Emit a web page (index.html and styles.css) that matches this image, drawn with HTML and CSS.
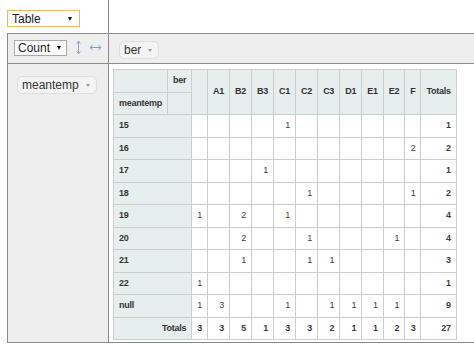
FILE: index.html
```html
<!DOCTYPE html>
<html>
<head>
<meta charset="utf-8">
<link rel="stylesheet" href="styles.css">
</head>
<body>
<div class="ui">
  <div class="cell renderers">
    <div class="select select-renderer"><span>Table</span><span class="caret"></span></div>
  </div>
  <div class="cell unused"></div>
  <div class="cell aggregator">
    <div class="select select-agg"><span>Count</span><span class="caret"></span></div>
    <svg class="order row-order" width="5" height="15" viewBox="0 0 5 15"><path d="M2.5 1.2V13.8M0.6 3.6L2.5 1.2L4.4 3.6M0.6 11.4L2.5 13.8L4.4 11.4" fill="none" stroke="#8aa6c6" stroke-width="1"/></svg>
    <svg class="order col-order" width="13" height="7" viewBox="0 0 13 7"><path d="M1 3.5H12M3.6 1.2L1 3.5L3.6 5.8M9.4 1.2L12 3.5L9.4 5.8" fill="none" stroke="#6f9fd6" stroke-width="1"/></svg>
  </div>
  <div class="cell cols">
    <span class="attr">ber<span class="tri"></span></span>
  </div>
  <div class="cell rows">
    <span class="attr">meantemp<span class="tri"></span></span>
  </div>
  <div class="cell output">
    <table class="pvtTable">
      <thead>
        <tr>
          <th></th>
          <th class="pvtAxisLabel">ber</th>
          <th class="pvtColLabel" rowspan="2"></th>
          <th class="pvtColLabel" rowspan="2">A1</th>
          <th class="pvtColLabel" rowspan="2">B2</th>
          <th class="pvtColLabel" rowspan="2">B3</th>
          <th class="pvtColLabel" rowspan="2">C1</th>
          <th class="pvtColLabel" rowspan="2">C2</th>
          <th class="pvtColLabel" rowspan="2">C3</th>
          <th class="pvtColLabel" rowspan="2">D1</th>
          <th class="pvtColLabel" rowspan="2">E1</th>
          <th class="pvtColLabel" rowspan="2">E2</th>
          <th class="pvtColLabel" rowspan="2">F</th>
          <th class="pvtTotalLabel" rowspan="2">Totals</th>
        </tr>
        <tr>
          <th class="pvtAxisLabel">meantemp</th>
          <th></th>
        </tr>
      </thead>
      <tbody>
        <tr><th class="pvtRowLabel" colspan="2">15</th><td></td><td></td><td></td><td></td><td>1</td><td></td><td></td><td></td><td></td><td></td><td></td><td class="pvtTotal">1</td></tr>
        <tr><th class="pvtRowLabel" colspan="2">16</th><td></td><td></td><td></td><td></td><td></td><td></td><td></td><td></td><td></td><td></td><td>2</td><td class="pvtTotal">2</td></tr>
        <tr><th class="pvtRowLabel" colspan="2">17</th><td></td><td></td><td></td><td>1</td><td></td><td></td><td></td><td></td><td></td><td></td><td></td><td class="pvtTotal">1</td></tr>
        <tr><th class="pvtRowLabel" colspan="2">18</th><td></td><td></td><td></td><td></td><td></td><td>1</td><td></td><td></td><td></td><td></td><td>1</td><td class="pvtTotal">2</td></tr>
        <tr><th class="pvtRowLabel" colspan="2">19</th><td>1</td><td></td><td>2</td><td></td><td>1</td><td></td><td></td><td></td><td></td><td></td><td></td><td class="pvtTotal">4</td></tr>
        <tr><th class="pvtRowLabel" colspan="2">20</th><td></td><td></td><td>2</td><td></td><td></td><td>1</td><td></td><td></td><td></td><td>1</td><td></td><td class="pvtTotal">4</td></tr>
        <tr><th class="pvtRowLabel" colspan="2">21</th><td></td><td></td><td>1</td><td></td><td></td><td>1</td><td>1</td><td></td><td></td><td></td><td></td><td class="pvtTotal">3</td></tr>
        <tr><th class="pvtRowLabel" colspan="2">22</th><td>1</td><td></td><td></td><td></td><td></td><td></td><td></td><td></td><td></td><td></td><td></td><td class="pvtTotal">1</td></tr>
        <tr><th class="pvtRowLabel" colspan="2">null</th><td>1</td><td>3</td><td></td><td></td><td>1</td><td></td><td>1</td><td>1</td><td>1</td><td>1</td><td></td><td class="pvtTotal">9</td></tr>
        <tr><th class="pvtTotalLabel" colspan="2">Totals</th><td class="pvtTotal">3</td><td class="pvtTotal">3</td><td class="pvtTotal">5</td><td class="pvtTotal">1</td><td class="pvtTotal">3</td><td class="pvtTotal">3</td><td class="pvtTotal">2</td><td class="pvtTotal">1</td><td class="pvtTotal">1</td><td class="pvtTotal">2</td><td class="pvtTotal">3</td><td class="pvtGrandTotal">27</td></tr>
      </tbody>
    </table>
  </div>
</div>
</body>
</html>
```

FILE: styles.css
```css
html, body {
  margin: 0;
  padding: 0;
}
body {
  font-family: "Liberation Sans", Arial, sans-serif;
  color: #333;
  background: #fff;
  overflow: hidden;
}
.ui {
  display: grid;
  grid-template-columns: 101px 1fr;
  margin-left: 7px;
}
.cell {
  box-sizing: border-box;
}
.renderers {
  height: 34px;
  padding-top: 10px;
  border-bottom: 1px solid #8c8c8c;
}
.unused {
  height: 34px;
  border-left: 1px solid #8c8c8c;
  border-bottom: 1px solid #8c8c8c;
}
.aggregator {
  height: 30px;
  display: flex;
  align-items: flex-start;
  padding: 6px 0 0 6px;
  background: #eeeeee;
  border-left: 1px solid #8c8c8c;
  border-bottom: 1px solid #8c8c8c;
}
.cols {
  height: 30px;
  padding: 6px 0 0 10px;
  background: #eeeeee;
  border-left: 1px solid #8c8c8c;
  border-bottom: 1px solid #8c8c8c;
}
.rows {
  padding: 11px 0 0 9px;
  background: #eeeeee;
  border-left: 1px solid #8c8c8c;
  border-bottom: 1px solid #8c8c8c;
}
.output {
  padding: 5px 0 2px 4px;
  background: #fff;
  border-left: 1px solid #8c8c8c;
  border-bottom: 1px solid #8c8c8c;
}
.select {
  display: flex;
  align-items: center;
  justify-content: space-between;
  box-sizing: border-box;
  background: #fff;
  font-size: 12px;
  color: #222;
}
.select-renderer {
  width: 73px;
  height: 17px;
  border: 1px solid #e0bb68;
  padding: 0 7px 0 4px;
}
.select-agg {
  width: 53px;
  height: 16px;
  border: 1px solid #a8a8a8;
  padding: 0 5px 0 3px;
}
.caret {
  width: 0;
  height: 0;
  border-left: 2.5px solid transparent;
  border-right: 2.5px solid transparent;
  border-top: 4px solid #111;
}
.order {
  display: block;
}
.row-order {
  margin-left: 9px;
}
.col-order {
  margin-left: 8px;
  margin-top: 4px;
}
.attr {
  display: inline-flex;
  align-items: center;
  box-sizing: border-box;
  height: 18px;
  padding: 0 6px 0 4px;
  background: #f3f3f3;
  border: 1px solid #dedede;
  border-radius: 5px;
  font-size: 12px;
  color: #333;
  white-space: nowrap;
}
.tri {
  margin-left: 7px;
  width: 0;
  height: 0;
  border-left: 2px solid transparent;
  border-right: 2px solid transparent;
  border-top: 3px solid #9a9a9a;
}
table.pvtTable {
  border-collapse: collapse;
  font-family: "Liberation Sans", Arial, sans-serif;
  font-size: 9px;
  line-height: 11.5px;
  letter-spacing: -0.25px;
  text-align: left;
}
table.pvtTable th {
  background: #e6eeee;
  border: 1px solid #cdcdcd;
  padding: 5px;
  font-weight: bold;
  color: #333;
  text-align: left;
}
table.pvtTable td {
  background: #fff;
  border: 1px solid #cdcdcd;
  padding: 5px;
  color: #3d3d3d;
  text-align: right;
  vertical-align: top;
}
table.pvtTable th.pvtColLabel {
  text-align: center;
}
table.pvtTable th.pvtTotalLabel {
  text-align: right;
}
table.pvtTable .pvtTotal,
table.pvtTable .pvtGrandTotal {
  font-weight: bold;
}
```
